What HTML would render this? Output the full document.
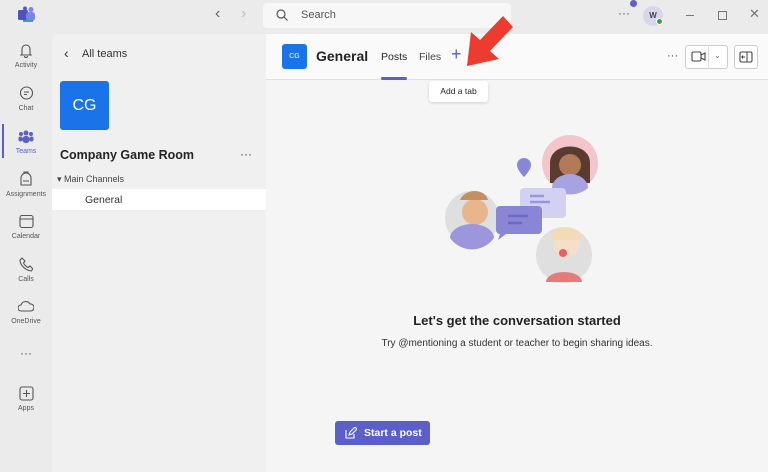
<!DOCTYPE html><html><head><style>
*{margin:0;padding:0;box-sizing:border-box}
body{width:768px;height:472px;overflow:hidden;background:#ebebeb;font-family:"Liberation Sans",sans-serif;position:relative;color:#242424}
.a{position:absolute}
.ri{position:absolute;left:0;width:52px;text-align:center;font-size:7px;color:#555}
.ri svg{display:block;margin:0 auto 4px}
</style></head><body>
<!-- top bar -->
<svg class="a" style="left:17px;top:6px" width="20" height="18"><rect x="1" y="4" width="10" height="10" rx="1.5" fill="#4b53bc"/><rect x="9" y="6" width="9" height="9" rx="3" fill="#7b83eb"/><circle cx="14" cy="3.5" r="2.5" fill="#7b83eb"/><circle cx="8" cy="2.5" r="2" fill="#5059c9"/><rect x="6" y="14" width="10" height="2" fill="#3ba1a1"/></svg>
<div class="a" style="left:215px;top:5px;font-size:16px;color:#666">‹</div>
<div class="a" style="left:241px;top:5px;font-size:16px;color:#bbb">›</div>
<div class="a" style="left:263px;top:3px;width:248px;height:25px;background:#f7f7f7;border-radius:4px"></div>
<svg class="a" style="left:276px;top:9px" width="12" height="12"><circle cx="5" cy="5" r="4" fill="none" stroke="#555" stroke-width="1.2"/><path d="M8 8l3.5 3.5" stroke="#555" stroke-width="1.2"/></svg>
<div class="a" style="left:301px;top:9px;font-size:11px;color:#555">Search</div>
<div class="a" style="left:618px;top:6px;font-size:12px;color:#555">···</div>
<div class="a" style="left:630px;top:0px;width:7px;height:7px;border-radius:50%;background:#5b5fc7"></div>
<div class="a" style="left:643px;top:6px;width:20px;height:20px;border-radius:50%;background:#d8d6ee;font-size:8px;font-weight:bold;text-align:center;line-height:20px;color:#444">W</div>
<div class="a" style="left:656px;top:18px;width:7px;height:7px;border-radius:50%;background:#3ba13b;border:1px solid #fff"></div>
<div class="a" style="left:686px;top:15px;width:8px;height:1px;background:#777"></div>
<div class="a" style="left:718px;top:11px;width:9px;height:9px;border:1px solid #777"></div>
<div class="a" style="left:749px;top:6px;font-size:13px;color:#777">✕</div>
<!-- rail -->
<div class="a" style="left:2px;top:124px;width:2px;height:34px;background:#5b5fc7"></div>
<div class="ri" style="top:43px"><svg width="14" height="15"><path d="M3 11V6a4 4 0 018 0v5l1 1H2z M5.5 13a1.5 1.5 0 003 0" fill="none" stroke="#555" stroke-width="1.1"/></svg>Activity</div>
<div class="ri" style="top:86px"><svg width="15" height="15"><circle cx="7.5" cy="7" r="6" fill="none" stroke="#555" stroke-width="1.1"/><path d="M5 6h5M5 8.5h3" stroke="#555"/></svg>Chat</div>
<div class="ri" style="top:129px;color:#5b5fc7"><svg width="16" height="15"><circle cx="8" cy="4" r="2.5" fill="#5b5fc7"/><circle cx="3" cy="5" r="2" fill="#5b5fc7"/><circle cx="13" cy="5" r="2" fill="#5b5fc7"/><rect x="4.5" y="7" width="7" height="7" rx="3" fill="#5b5fc7"/><rect x="0.5" y="7.5" width="4" height="5" rx="2" fill="#5b5fc7"/><rect x="11.5" y="7.5" width="4" height="5" rx="2" fill="#5b5fc7"/></svg>Teams</div>
<div class="ri" style="top:171px"><svg width="14" height="16"><path d="M2 14V7a5 5 0 0110 0v7z M5 3V1h4v2 M4 10h6" fill="none" stroke="#555" stroke-width="1.1"/></svg>Assignments</div>
<div class="ri" style="top:214px"><svg width="15" height="15"><rect x="1" y="1.5" width="13" height="12" rx="2" fill="none" stroke="#555" stroke-width="1.1"/><path d="M1 5h13" stroke="#555"/></svg>Calendar</div>
<div class="ri" style="top:257px"><svg width="14" height="15"><path d="M3 1l3 3-1.5 2c1 2 2.5 3.5 4.5 4.5L11 9l3 3-2 2C6 13 1 8 1 3z" fill="none" stroke="#555" stroke-width="1.1"/></svg>Calls</div>
<div class="ri" style="top:299px"><svg width="16" height="15"><path d="M3 12a3 3 0 010-6 5 5 0 019-1 3.5 3.5 0 011 7z" fill="none" stroke="#555" stroke-width="1.1"/></svg>OneDrive</div>
<div class="ri" style="top:346px;font-size:12px">···</div>
<div class="ri" style="top:386px"><svg width="15" height="15"><rect x="1" y="1" width="13" height="13" rx="2" fill="none" stroke="#555" stroke-width="1.1"/><path d="M7.5 4v7M4 7.5h7" stroke="#555" stroke-width="1.1"/></svg>Apps</div>
<!-- sidebar -->
<div class="a" style="left:52px;top:34px;width:214px;height:438px;background:#f0f0f0;border-radius:6px 0 0 0"></div>
<div class="a" style="left:64px;top:45px;font-size:14px;color:#333">‹</div>
<div class="a" style="left:82px;top:48px;font-size:11px;color:#333">All teams</div>
<div class="a" style="left:60px;top:81px;width:49px;height:49px;background:#1a73e8;border-radius:3px;color:#fff;font-size:16px;text-align:center;line-height:49px">CG</div>
<div class="a" style="left:60px;top:148px;font-size:12.5px;font-weight:bold">Company Game Room</div>
<div class="a" style="left:240px;top:147px;font-size:12px;color:#444">···</div>
<div class="a" style="left:57px;top:174px;font-size:9px;color:#444">▾ Main Channels</div>
<div class="a" style="left:52px;top:189px;width:214px;height:21px;background:#fff"></div>
<div class="a" style="left:85px;top:194px;font-size:10.5px;color:#333">General</div>
<!-- main -->
<div class="a" style="left:266px;top:34px;width:502px;height:438px;background:#f5f5f5"></div>
<div class="a" style="left:266px;top:34px;width:502px;height:46px;background:#fafafa;border-bottom:1px solid #e0e0e0"></div>
<div class="a" style="left:282px;top:44px;width:25px;height:25px;background:#1a73e8;border-radius:3px;color:#fff;font-size:7px;text-align:center;line-height:25px">CG</div>
<div class="a" style="left:316px;top:48px;font-size:14px;font-weight:bold">General</div>
<div class="a" style="left:381px;top:51px;font-size:10.5px">Posts</div>
<div class="a" style="left:381px;top:77px;width:26px;height:3px;background:#5b5fc7;border-radius:2px"></div>
<div class="a" style="left:419px;top:51px;font-size:10.5px;color:#444">Files</div>
<div class="a" style="left:451px;top:44px;font-size:18px;color:#5b5fc7">+</div>
<svg class="a" style="left:465px;top:14px" width="50" height="56"><polygon points="2,52 6,18 15,26 38,2 48,13 25,37 34,45" fill="#ee3b30"/></svg>
<div class="a" style="left:429px;top:81px;width:59px;height:21px;background:#fff;border-radius:3px;box-shadow:0 1px 3px rgba(0,0,0,.15);font-size:8.5px;text-align:center;line-height:21px">Add a tab</div>
<div class="a" style="left:667px;top:50px;font-size:11px;color:#444">···</div>
<div class="a" style="left:685px;top:45px;width:43px;height:24px;border:1px solid #ccc;border-radius:3px;background:#fff"></div>
<div class="a" style="left:708px;top:45px;width:1px;height:24px;background:#ddd"></div>
<svg class="a" style="left:691px;top:51px" width="16" height="12"><rect x="1" y="1" width="9" height="9" rx="1.5" fill="none" stroke="#444" stroke-width="1.1"/><path d="M10 4l4-2v7l-4-2" fill="none" stroke="#444" stroke-width="1.1"/></svg>
<div class="a" style="left:714px;top:51px;font-size:8px;color:#666">⌄</div>
<div class="a" style="left:734px;top:45px;width:24px;height:24px;border:1px solid #ccc;border-radius:3px;background:#fff"></div>
<svg class="a" style="left:739px;top:51px" width="14" height="12"><rect x="1" y="1" width="12" height="10" rx="1.5" fill="none" stroke="#444" stroke-width="1.1"/><path d="M8 1v10M3 6h3M4 4.5L2.8 6 4 7.5" fill="none" stroke="#444"/></svg>
<!-- illustration -->
<svg class="a" style="left:420px;top:120px" width="200" height="170">
<circle cx="150" cy="43" r="28" fill="#f4c6cc"/><path d="M130 43c0-22 40-22 40 0v20h-40z" fill="#5a3b30"/><circle cx="150" cy="45" r="11" fill="#b27a56"/><path d="M132 68a18 14 0 0136 0 28 28 0 01-36 0z" fill="#a7a2e0"/>
<circle cx="52" cy="98" r="27" fill="#e0dfe0"/><circle cx="55" cy="92" r="13" fill="#e8b68c"/><path d="M40 80c5-12 25-12 28 0z" fill="#c5905f"/><path d="M30 118a22 14 0 0144 0 27 27 0 01-44 0z" fill="#9c97dc"/>
<circle cx="144" cy="135" r="28" fill="#e0dfe0"/><circle cx="146" cy="124" r="13" fill="#f5dfc8"/><path d="M130 120c2-16 30-18 32 0z" fill="#f3dcb5"/><circle cx="143" cy="133" r="4" fill="#e95f5f"/><path d="M126 162a18 10 0 0136 0z" fill="#e47a7a"/>
<path d="M97 45a7 7 0 0114 0c0 5-7 12-7 12s-7-7-7-12z" fill="#8a86d6"/>
<rect x="100" y="68" width="46" height="30" rx="4" fill="#d3d1f2"/><path d="M110 76h14M110 82h20" stroke="#9a96de" stroke-width="2.5"/>
<rect x="76" y="86" width="46" height="28" rx="4" fill="#8a86d6"/><path d="M80 114l-2 6 8-6z" fill="#8a86d6"/><path d="M88 96h20M88 103h14" stroke="#6d69c6" stroke-width="2.5"/>
</svg>
<div class="a" style="left:266px;top:313px;width:502px;text-align:center;font-size:13px;font-weight:bold">Let's get the conversation started</div>
<div class="a" style="left:266px;top:338px;width:502px;text-align:center;font-size:10px;color:#333">Try @mentioning a student or teacher to begin sharing ideas.</div>
<div class="a" style="left:335px;top:421px;width:95px;height:24px;background:#5b5fc7;border-radius:3px;color:#fff;font-size:10.5px;font-weight:bold;line-height:24px;padding-left:29px">Start a post</div>
<svg class="a" style="left:345px;top:427px" width="12" height="12"><path d="M1 3v8h8V7M4 8l1-3 5-5 2 2-5 5z" fill="none" stroke="#fff" stroke-width="1.1"/></svg>
</body></html>
